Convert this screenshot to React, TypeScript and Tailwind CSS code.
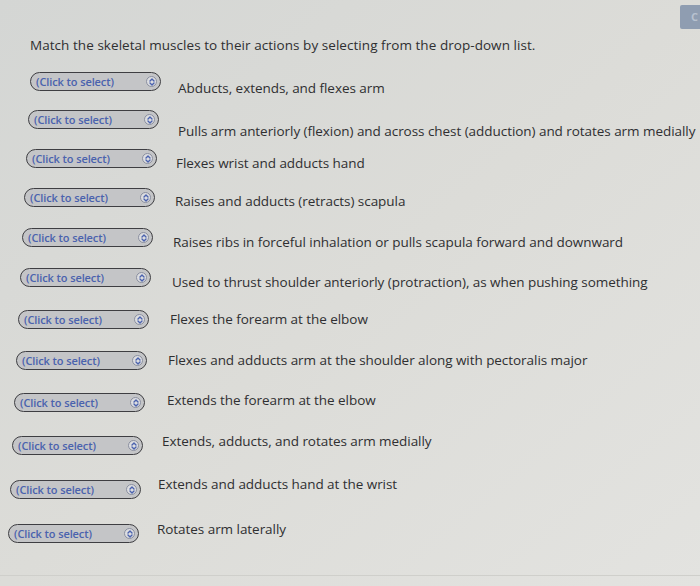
import React from 'react';

type Row = { text: string; left: number; gap: number; height: number; shift: number };

// the photo is skewed: rows drift left and spread apart toward the bottom
const rows: Row[] = [
  { text: 'Abducts, extends, and flexes arm', left: 30, gap: 17, height: 38, shift: 7 },
  { text: 'Pulls arm anteriorly (flexion) and across chest (adduction) and rotates arm medially', left: 28, gap: 19, height: 39, shift: 12 },
  { text: 'Flexes wrist and adducts hand', left: 26, gap: 19, height: 39, shift: 5 },
  { text: 'Raises and adducts (retracts) scapula', left: 24, gap: 20, height: 40, shift: 4 },
  { text: 'Raises ribs in forceful inhalation or pulls scapula forward and downward', left: 22, gap: 20, height: 40, shift: 5 },
  { text: 'Used to thrust shoulder anteriorly (protraction), as when pushing something', left: 20, gap: 21, height: 42, shift: 5 },
  { text: 'Flexes the forearm at the elbow', left: 18, gap: 21, height: 41, shift: 0 },
  { text: 'Flexes and adducts arm at the shoulder along with pectoralis major', left: 16, gap: 21, height: 42, shift: 0 },
  { text: 'Extends the forearm at the elbow', left: 14, gap: 22, height: 43, shift: -2 },
  { text: 'Extends, adducts, and rotates arm medially', left: 12, gap: 19, height: 44, shift: -4 },
  { text: 'Extends and adducts hand at the wrist', left: 10, gap: 17, height: 44, shift: -5 },
  { text: 'Rotates arm laterally', left: 8, gap: 18, height: 44, shift: -4 },
];

function SelectPill() {
  return (
    <div className="flex h-[19px] w-[131px] shrink-0 items-center justify-between rounded-full border-[1.5px] border-[#3e3e42] bg-[#c4c5c7] pl-[5px] pr-[3px]">
      <span className="text-[11px] font-semibold leading-none tracking-[-0.1px] text-[#4a62ae]">(Click to select)</span>
      <span className="flex h-[11px] w-[11px] items-center justify-center rounded-full border border-[#8a8fa0] bg-[#dcdde0]">
        <svg width="6" height="8" viewBox="0 0 6 8" fill="none" stroke="#4a62ae" strokeWidth="1.4" strokeLinecap="round" strokeLinejoin="round">
          <path d="M1 3 L3 1 L5 3" />
          <path d="M1 5 L3 7 L5 5" />
        </svg>
      </span>
    </div>
  );
}

export default function App() {
  return (
    <div
      className="relative h-[586px] w-[700px] overflow-hidden bg-gradient-to-br from-[#d4d6d4] via-[#dcdcd8] to-[#e3e3e0] text-[#2f2f31]"
      style={{ fontFamily: '"Open Sans", Lato, sans-serif' }}
    >
      {/* partially visible button in the corner */}
      <div className="absolute right-0 top-[5px] flex h-[24px] w-[20px] items-center justify-end rounded-l-[2px] bg-[#8f9db1] pr-[2px]">
        <span className="text-[11px] font-bold text-[#b8c2d0]">C</span>
      </div>

      <div className="flex flex-col pt-[35px]">
        <p className="ml-[30px] mb-[17px] text-[13.5px] leading-[20px] tracking-[0.05px]">
          Match the skeletal muscles to their actions by selecting from the drop-down list.
        </p>

        {rows.map((r, i) => (
          <div
            key={i}
            className="flex items-start"
            style={{ paddingLeft: r.left, height: r.height, gap: r.gap }}
          >
            <SelectPill />
            <span
              className="whitespace-nowrap text-[13.5px] leading-[19px] tracking-[-0.05px]"
              style={{ marginTop: r.shift }}
            >
              {r.text}
            </span>
          </div>
        ))}
      </div>

      <div className="absolute bottom-[10px] left-0 right-0 h-px bg-[#cfcfcb]" />
    </div>
  );
}
